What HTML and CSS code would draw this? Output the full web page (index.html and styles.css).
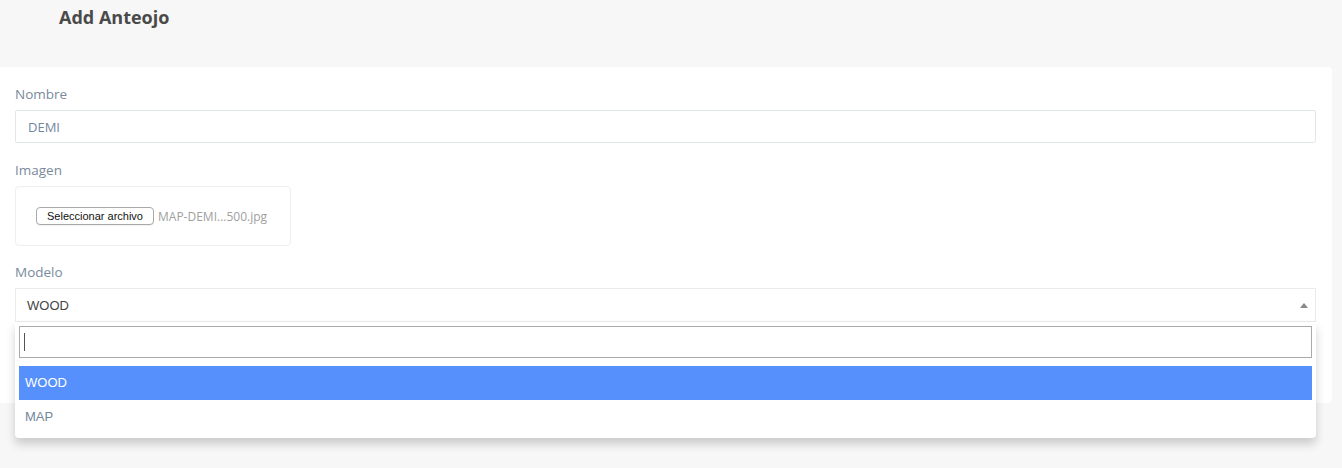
FILE: index.html
```html
<!DOCTYPE html>
<html>
<head>
<meta charset="utf-8">
<link rel="stylesheet" href="styles.css">
</head>
<body>
  <div class="page-title">
    <h3>Add Anteojo</h3>
  </div>
  <div class="panel">
    <div class="form-group">
      <label class="control-label">Nombre</label>
      <div class="form-control">DEMI</div>
    </div>
    <div class="form-group file-group">
      <label class="control-label">Imagen</label>
      <div class="file-box">
        <span class="file-btn">Seleccionar archivo</span>
        <span class="file-name">MAP-DEMI...500.jpg</span>
      </div>
    </div>
    <div class="form-group select-group">
      <label class="control-label">Modelo</label>
      <div class="select-wrap">
        <div class="select">
          <span class="select-value">WOOD</span>
          <span class="select-arrow"></span>
        </div>
        <div class="dropdown">
          <div class="search"><span class="caret"></span></div>
          <ul class="options">
            <li class="option highlighted">WOOD</li>
            <li class="option">MAP</li>
          </ul>
        </div>
      </div>
    </div>
  </div>
</body>
</html>
```
FILE: styles.css
```css
html, body {
  margin: 0;
  padding: 0;
}
body {
  background: #f7f7f7;
  font-family: "Open Sans", "Liberation Sans", sans-serif;
  font-size: 13px;
  color: #73879c;
  height: 468px;
  overflow: hidden;
}
.page-title {
  height: 67px;
  padding-left: 59px;
  box-sizing: border-box;
}
.page-title h3 {
  margin: 0;
  padding-top: 5px;
  font-size: 18px;
  line-height: 24px;
  font-weight: 700;
  color: #4a4a4a;
}
.panel {
  background: #fff;
  width: 1332px;
  box-sizing: border-box;
  padding: 18px 16px 81px 15px;
  border-radius: 0 4px 4px 0;
}
.form-group {
  display: flex;
  flex-direction: column;
  margin-bottom: 18px;
}
.form-group.file-group {
  margin-bottom: 17px;
}
.form-group.select-group {
  margin-bottom: 0;
}
.control-label {
  display: block;
  font-size: 13.5px;
  line-height: 18px;
  height: 18px;
  margin-bottom: 7px;
  color: #7a8a9c;
}
.form-control {
  height: 33px;
  box-sizing: border-box;
  border: 1px solid #e2e8e8;
  border-radius: 2px;
  padding: 0 12px;
  display: flex;
  align-items: center;
  color: #73879c;
  font-size: 13px;
}
.file-box {
  width: 276px;
  height: 60px;
  box-sizing: border-box;
  border: 1px solid #eeeeee;
  border-radius: 4px;
  padding-left: 20px;
  display: flex;
  align-items: center;
  gap: 4px;
}
.file-btn {
  font-family: "Liberation Sans", Arial, sans-serif;
  font-size: 11px;
  color: #111;
  background: #fff;
  border: 1px solid #a9a9a9;
  border-radius: 4px;
  height: 18px;
  line-height: 16px;
  box-sizing: border-box;
  padding: 0 10px 0 10px;
  box-shadow: 0 1px 0 rgba(0,0,0,0.05);
}
.file-name {
  color: #a0a0a0;
  font-size: 12px;
}
.select-wrap {
  position: relative;
}
.select {
  height: 34px;
  box-sizing: border-box;
  border: 1px solid #eaeaea;
  display: flex;
  align-items: center;
  justify-content: space-between;
  padding: 0 7px 0 11px;
  background: #fff;
}
.select-value {
  font-family: "Liberation Sans", Arial, sans-serif;
  font-size: 13px;
  color: #444;
}
.select-arrow {
  width: 0;
  height: 0;
  border-style: solid;
  border-width: 0 4px 5px 4px;
  border-color: transparent transparent #888 transparent;
}
.dropdown {
  position: absolute;
  left: 0;
  right: 0;
  top: 34px;
  background: #fff;
  padding: 4px 4px 5px 4px;
  border-radius: 0 0 4px 4px;
  box-shadow: 0 6px 10px rgba(0,0,0,0.18);
  font-family: "Liberation Sans", Arial, sans-serif;
  font-size: 13px;
}
.search {
  height: 32px;
  box-sizing: border-box;
  border: 1px solid #aaa;
  display: flex;
  align-items: center;
  padding-left: 4px;
}
.caret {
  width: 1px;
  height: 18px;
  background: #555;
}
.options {
  list-style: none;
  margin: 8px 0 0 0;
  padding: 0;
}
.option {
  height: 34px;
  line-height: 34px;
  padding-left: 6px;
  color: #73879c;
}
.option.highlighted {
  background: #5590fc;
  color: #fff;
}
.option + .option {
  height: 33px;
  line-height: 33px;
}
```
